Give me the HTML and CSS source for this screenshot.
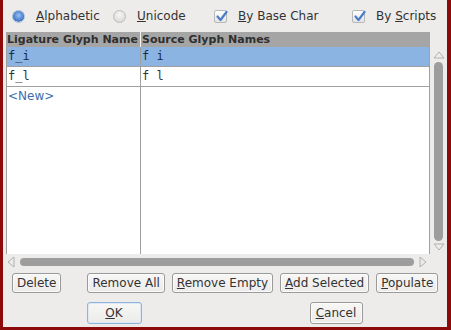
FILE: index.html
```html
<!DOCTYPE html>
<html lang="en">
<head>
  <meta charset="UTF-8">
  <title>Ligatures</title>
  <link rel="stylesheet" href="styles.css">
</head>
<body>
  <div class="window">
    <div class="options">
      <label class="opt opt-a"><span class="radio on"></span><span><u>A</u>lphabetic</span></label>
      <label class="opt opt-b"><span class="radio"></span><span><u>U</u>nicode</span></label>
      <label class="opt opt-c"><span class="check"><svg width="13" height="13" viewBox="0 0 13 13"><path d="M2.5 6.5 L5.5 10 L11.5 2" fill="none" stroke="#4a7fc8" stroke-width="2.2" stroke-linecap="round" stroke-linejoin="round"/></svg></span><span><u>B</u>y Base Char</span></label>
      <label class="opt"><span class="check"><svg width="13" height="13" viewBox="0 0 13 13"><path d="M2.5 6.5 L5.5 10 L11.5 2" fill="none" stroke="#4a7fc8" stroke-width="2.2" stroke-linecap="round" stroke-linejoin="round"/></svg></span><span>By <u>S</u>cripts</span></label>
    </div>

    <div class="grid">
      <div class="head">
        <div class="hcell first">Ligature Glyph Name</div>
        <div class="hcell">Source Glyph Names</div>
      </div>
      <div class="head-gap"></div>

      <div class="rows">
        <div class="row sel"><div class="cell first mono">f_i</div><div class="cell mono">f i</div></div>
        <div class="row"><div class="cell first mono">f_l</div><div class="cell mono">f l</div></div>
        <div class="row last"><div class="cell first new">&lt;New&gt;</div><div class="cell"></div></div>
        <div class="row filler"><div class="cell first"></div><div class="cell"></div></div>
      </div>

      <div class="vscroll">
        <svg class="arrow" width="12" height="8" viewBox="0 0 12 8"><path d="M1 7 L6 1 L11 7 Z" fill="none" stroke="#b0b0b0"/></svg>
        <div class="vthumb"></div>
        <svg class="arrow" width="12" height="8" viewBox="0 0 12 8"><path d="M1 1 L6 7 L11 1 Z" fill="none" stroke="#b0b0b0"/></svg>
      </div>

      <div class="hscroll">
        <svg class="arrow" width="8" height="12" viewBox="0 0 8 12"><path d="M7 1 L1 6 L7 11 Z" fill="none" stroke="#b0b0b0"/></svg>
        <div class="hthumb"></div>
        <svg class="arrow" width="8" height="12" viewBox="0 0 8 12"><path d="M1 1 L7 6 L1 11 Z" fill="none" stroke="#b0b0b0"/></svg>
      </div>
    </div>

    <div class="actions">
      <button class="btn b-delete">Delete</button>
      <button class="btn b-removeall">Remove All</button>
      <button class="btn"><u>R</u>emove Empty</button>
      <button class="btn"><u>A</u>dd Selected</button>
      <button class="btn"><u>P</u>opulate</button>
    </div>

    <div class="footer">
      <button class="btn default b-ok"><u>O</u>K</button>
      <button class="btn b-cancel"><u>C</u>ancel</button>
    </div>
  </div>
</body>
</html>
```

FILE: styles.css
```css
body {
  margin: 0;
  font-family: 'DejaVu Sans', sans-serif;
  font-size: 12px;
  color: #333;
  background: #edeceb;
}

.window {
  width: 451px;
  height: 330px;
  box-sizing: border-box;
  border-left: 3px solid #8c0a0a;
  border-right: 4px solid #8c0a0a;
  border-bottom: 3px solid #8c0a0a;
  background: #edeceb;
}

/* top row of radio buttons and check boxes */
.options {
  display: flex;
  align-items: center;
  height: 32px;
  padding-left: 9px;
}

.opt {
  display: flex;
  align-items: center;
  gap: 11px;
}

.opt-a, .opt-b { width: 101px; }
.opt-c { width: 138px; }

.radio {
  width: 11px;
  height: 11px;
  border-radius: 50%;
  border: 1px solid #bdbdbd;
  background: radial-gradient(circle at 50% 35%, #f6f6f6, #d2d2d2);
}

.radio.on {
  border-color: #a9bcd6;
  background: radial-gradient(circle at 50% 40%, #9cc0ee 0, #5c8fd8 45%, #3f74c2 70%, #c9d6e8 75%);
}

.check {
  width: 11px;
  height: 11px;
  border: 1px solid #b8b8b8;
  border-radius: 2px;
  background: linear-gradient(#ffffff, #e4e4e4);
  position: relative;
}

.check svg {
  position: absolute;
  left: 0;
  top: -1px;
}

/* glyph list */
.grid {
  display: grid;
  grid-template-columns: 424px 17px;
  grid-template-rows: 15px 207px 15px;
  margin-left: 3px;
}

.head {
  display: grid;
  grid-template-columns: 135px 1fr;
  background: #a5a5a5;
  font-size: 11px;
  font-weight: bold;
  color: #2f2f2f;
}

.hcell {
  padding-left: 1px;
  line-height: 15px;
  white-space: nowrap;
  overflow: hidden;
}

.hcell.first {
  border-right: 1px solid #f2f2f2;
}

.rows {
  background: #fff;
  border-left: 1px solid #a0a0a0;
  border-right: 1px solid #a0a0a0;
  display: flex;
  flex-direction: column;
}

.row {
  display: grid;
  grid-template-columns: 134px 1fr;
  height: 19px;
  border-bottom: 1px solid #a0a0a0;
}

.row.last { border-bottom: none; }
.row.filler { flex: 1; border-bottom: none; }

.row.sel { background: #8cb4e2; color: #1e2a3a; }

.cell {
  padding-left: 1px;
  line-height: 19px;
}

.cell.first { border-right: 1px solid #a0a0a0; }

.mono { font-family: 'DejaVu Sans Mono', monospace; }

.new { color: #3d6db0; }

.vscroll {
  grid-column: 2;
  grid-row: 2;
  display: flex;
  flex-direction: column;
  align-items: center;
  padding: 4px 0 3px;
}

.vthumb {
  flex: 1;
  width: 9px;
  margin: 3px 0 2px;
  border-radius: 5px;
  background: #9d9d9d;
}

.hscroll {
  grid-column: 1;
  grid-row: 3;
  display: flex;
  align-items: center;
  padding: 0 3px 0 1px;
}

.hthumb {
  flex: 1;
  height: 8px;
  margin: 0 5px 0 5px;
  border-radius: 4px;
  background: #9d9d9d;
}

.arrow { display: block; flex: none; }

/* buttons */
.actions {
  display: flex;
  gap: 7px;
  margin-top: 4px;
  padding-left: 9px;
}

.btn {
  font-family: 'DejaVu Sans', sans-serif;
  font-size: 12px;
  color: #333;
  height: 20px;
  padding: 0 4px;
  border: 1px solid #9a9a9a;
  border-radius: 3px;
  background: linear-gradient(#f7f7f6, #ecebea);
  box-shadow: inset 0 0 0 1px #fbfbfb;
  line-height: 17px;
}

.b-delete { margin-right: 19px; }

.footer {
  display: grid;
  grid-template-columns: 1fr 1fr;
  justify-items: center;
  margin-top: 9px;
}

.footer .btn { height: 22px; }

.b-ok { width: 55px; border-color: #8fb3da; box-shadow: inset 0 0 0 1px #dbe8f6; }
.b-cancel { width: 53px; }
```
